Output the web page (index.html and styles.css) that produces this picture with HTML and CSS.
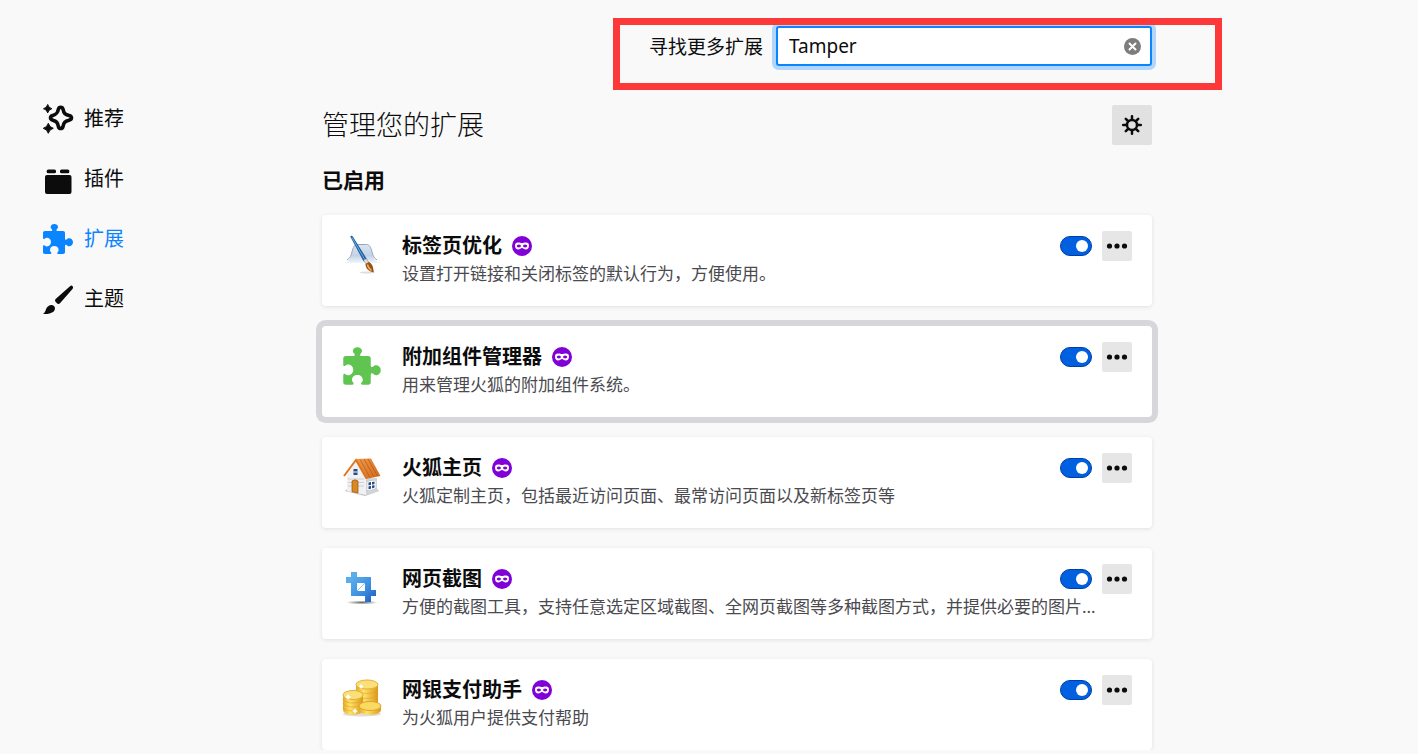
FILE: index.html
```
<!DOCTYPE html>
<html lang="zh-CN">
  <head>
    <meta charset="UTF-8" />
    <meta name="viewport" content="width=device-width, initial-scale=1" />
    <title>管理您的扩展</title>
    <link rel="stylesheet" href="styles.css" />
  </head>
  <body>
    <!-- shared icons -->
    <svg class="sprite" aria-hidden="true">
      <symbol id="icon-mask" viewBox="0 0 20 20">
        <circle cx="10" cy="10" r="10" fill="#8000d7" />
        <path fill="#fff" fill-rule="evenodd" d="M6 6.500c2 0 2.800.6 4 .6s2-.6 4-.6c2 0 3 .9 3 3 0 2.500-1.300 4-3.200 4-1.800 0-2.600-1.500-3.800-1.500s-2 1.500-3.800 1.500C4.300 13.500 3 12 3 9.500c0-2.100 1-3 3-3zM6.900 8.600c-1.300 0-2.100.9-2.100 1.400s.8 1.400 2.100 1.400S8.900 10.600 8.900 10s-.7-1.400-2-1.400zm6.200 0c-1.300 0-2 .8-2 1.400s.7 1.400 2 1.400 2.100-.9 2.100-1.400-.8-1.400-2.100-1.400z" />
      </symbol>
      <symbol id="icon-more" viewBox="0 0 30 30">
        <circle cx="7.500" cy="15" r="2.600" />
        <circle cx="15" cy="15" r="2.600" />
        <circle cx="22.500" cy="15" r="2.600" />
      </symbol>
      <symbol id="icon-puzzle" viewBox="0 0 32 32">
        <path d="M3 8h6c1.200 0 1.600-.8 1-1.600C9.200 5.500 8.700 5 8.700 4c0-1.800 1.600-3 3.600-3s3.700 1.200 3.700 3c0 1-.6 1.500-1.300 2.400-.6.8-.2 1.600 1 1.600H21c1.300 0 2 .7 2 2v5.500c0 1.200.8 1.600 1.600 1 .9-.7 1.400-1.200 2.600-1.200 2.200 0 3.800 1.700 3.800 4s-1.600 4-3.800 4c-1.200 0-1.700-.6-2.600-1.300-.8-.6-1.600-.2-1.600 1V29c0 1.300-.7 2-2 2h-4.500c-1.200 0-1.600-.8-1-1.600.7-.8 1.100-1.300 1.100-2.400 0-2.300-1.700-3.900-4.300-3.900S8 24.700 8 27c0 1.100.4 1.600 1.100 2.400.6.8.2 1.600-1 1.600H3c-1.300 0-2-.7-2-2v-5.500c0-1.200.8-1.600 1.600-1 .8.600 1.400.9 2.300.900C7.200 23.400 9 21.500 9 19s-1.800-4.200-4.100-4.200c-.9 0-1.500.3-2.300.9-.8.6-1.600.2-1.600-1V10c0-1.300.7-2 2-2z" />
      </symbol>
    </svg>

    <div class="page">
      <nav class="sidebar">
        <a class="category" href="#discover">
          <svg class="category-icon" viewBox="0 0 32 32">
            <path d="M18.700 4.200c1.400 0 2 .7 2.300 2 .8 4 1.900 5.200 6 6.200 1.600.4 2.500 1.100 2.500 2.400s-.9 2-2.500 2.400c-4.100 1-5.200 2.200-6 6.300-.3 1.300-.9 2-2.300 2s-2-.7-2.300-2c-.8-4.100-1.900-5.300-5.600-6.300-1.500-.4-2.300-1.100-2.300-2.400s.8-2 2.300-2.400c3.700-1 4.800-2.200 5.600-6.200.3-1.300.9-2 2.300-2z" fill="none" stroke="currentColor" stroke-width="3.600" stroke-linejoin="round" />
            <path d="M5.700 1.500q.8 3.400 4.200 4.200-3.400.8-4.200 4.200-.8-3.400-4.200-4.200 3.400-.8 4.200-4.200zM6.300 20.300q1 4 5 5-4 1-5 5-1-4-5-5 4-1 5-5z" stroke="currentColor" stroke-width="1" stroke-linejoin="round" />
          </svg>
          <span>推荐</span>
        </a>
        <a class="category" href="#plugins">
          <svg class="category-icon" viewBox="0 0 32 32">
            <rect x="4.700" y="6.500" width="9.300" height="3.800" rx="1.500" />
            <rect x="18" y="6.500" width="9.300" height="3.800" rx="1.500" />
            <rect x="3" y="12" width="26.500" height="19" rx="2" />
          </svg>
          <span>插件</span>
        </a>
        <a class="category selected" href="#extensions" aria-current="page">
          <svg class="category-icon"><use href="#icon-puzzle" /></svg>
          <span>扩展</span>
        </a>
        <a class="category" href="#themes">
          <svg class="category-icon" viewBox="0 0 32 32">
            <path d="M30.600 3.200c.8.900.6 1.800-.1 2.700L18.200 20.100c-1 1.100-2.300 1.200-3.500 0l-.8-.8c-1.200-1.200-1.100-2.500 0-3.500L28 3.200c.9-.8 1.800-.8 2.600 0zM12 23c1.700 1.800 1 4.700-1 6-2.300 1.600-6.300 2.400-10 1.900 2-1.300 2.200-2.700 3-4.700 1.200-3.600 5.600-5.600 8-3.200z" />
          </svg>
          <span>主题</span>
        </a>
      </nav>

      <main class="main">
        <form class="search">
          <label for="search-addons">寻找更多扩展</label>
          <div class="search-box">
            <input id="search-addons" type="text" value="Tamper" autocomplete="off" />
            <button class="clear" type="reset" aria-label="清除">
              <svg viewBox="0 0 17 17">
                <circle cx="8.500" cy="8.500" r="8.500" fill="#7d7d7d" />
                <path d="M5.500 5.500l6 6m0-6l-6 6" stroke="#fff" stroke-width="2" stroke-linecap="round" />
              </svg>
            </button>
          </div>
          <div class="marker"></div>
        </form>

        <header class="heading">
          <h1>管理您的扩展</h1>
          <button class="settings" type="button" aria-label="附加组件工具">
            <svg viewBox="0 0 20 20" fill="none" stroke="currentColor" stroke-width="2.500" stroke-linecap="round">
              <circle cx="10" cy="10" r="5" />
              <path d="M10 1.200v3M10 15.800v3M1.200 10h3M15.800 10h3M3.800 3.800l2.200 2.200M14 14l2.200 2.200M16.200 3.800L14 6M6 14l-2.200 2.200" />
            </svg>
          </button>
        </header>

        <h2>已启用</h2>

        <section class="addons">
          <article class="card">
            <svg class="addon-icon" viewBox="0 0 40 40">
              <defs>
                <linearGradient id="tab-fill" x2="0" y2="1">
                  <stop offset="0" stop-color="#dbe5f1" />
                  <stop offset=".6" stop-color="#c3d2e6" />
                  <stop offset="1" stop-color="#f2f6fb" />
                </linearGradient>
              </defs>
              <ellipse cx="25" cy="37.500" rx="7" ry="1" fill="#ddd" />
              <path d="M2 28c5-1 6.500-5 8-11 1.200-5 2.500-7.500 5.500-7.500h9c3 0 4.300 2.500 5.500 7.500 1.500 6 3 10 8 11z" fill="url(#tab-fill)" />
              <path d="M5 25c3-2 4-4 5-8 1.200-5 2.500-7.500 5.500-7.500h9c3 0 4.300 2.500 5.500 7.500 1 4 2 6 5 8" fill="none" stroke="#92a6c2" />
              <path d="M8.500 2L21.500 26.300l3.500-2L10.800 1.400c-.8-1.200-3-.6-2.300.6z" fill="#1f5f9f" />
              <path d="M10 2.500L23 25" stroke="#6fb0e2" stroke-width="1" />
              <path d="M21.500 25.300l3-1.700 2.400 4.200-2.600 1.500z" fill="#d9dce0" stroke="#777" stroke-width=".5" />
              <path d="M23.500 29l3.500-2c4.500 2.500 4 6.500 5 10.500-4.500-.8-8.500-3.500-8.500-8.500z" fill="#9a5216" />
              <path d="M25.500 29.500c.3 2.500 2 4.500 4 6" fill="none" stroke="#efb75a" stroke-width="1.500" />
            </svg>
            <h3>标签页优化 <svg class="badge"><use href="#icon-mask" /></svg></h3>
            <div class="actions">
              <input class="toggle" type="checkbox" checked aria-label="标签页优化" />
              <button class="more" type="button" aria-label="更多选项"><svg><use href="#icon-more" /></svg></button>
            </div>
            <p>设置打开链接和关闭标签的默认行为，方便使用。</p>
          </article>

          <article class="card highlight">
            <svg class="addon-icon green"><use href="#icon-puzzle" /></svg>
            <h3>附加组件管理器 <svg class="badge"><use href="#icon-mask" /></svg></h3>
            <div class="actions">
              <input class="toggle" type="checkbox" checked aria-label="附加组件管理器" />
              <button class="more" type="button" aria-label="更多选项"><svg><use href="#icon-more" /></svg></button>
            </div>
            <p>用来管理火狐的附加组件系统。</p>
          </article>

          <article class="card">
            <svg class="addon-icon" viewBox="0 0 40 40">
              <defs>
                <linearGradient id="roof" x2="1" y2="1">
                  <stop offset="0" stop-color="#f09a48" />
                  <stop offset="1" stop-color="#d0691c" />
                </linearGradient>
              </defs>
              <path d="M3 34l20 5 14-5-3-3H6z" fill="#999" opacity=".6" />
              <path d="M5 18l9-13L24 21v17L5 34z" fill="#f1f1f3" />
              <path d="M24 21h11v13l-11 4z" fill="#d4d5da" />
              <path d="M6 22h16M6 25.500h16M6 29h16M24 24l11-1M24 31l11-2M24 34.500l11-3" stroke="#c5c6cb" stroke-width=".8" />
              <path d="M14 2l15-.5L38.500 19 24 22z" fill="url(#roof)" />
              <path d="M18 2.500l10 18M22 2l10 18M26 2l9.500 17" stroke="#b9561a" stroke-width=".7" />
              <path d="M2 19L14 3l10.500 18.500" fill="none" stroke="#dd7420" stroke-width="2" />
              <path d="M11.500 12h4v6h-4z" fill="#244e83" />
              <path d="M11.500 15h4" stroke="#fff" />
              <path d="M10 24q3-2.500 6 0v12l-6-1.200z" fill="#d9891f" stroke="#94510e" stroke-width=".7" />
              <path d="M26 25l7-1v7l-7 2z" fill="#244e83" stroke="#fff" />
              <path d="M29.500 24.500v8M26 29l7-1.500" stroke="#fff" />
            </svg>
            <h3>火狐主页 <svg class="badge"><use href="#icon-mask" /></svg></h3>
            <div class="actions">
              <input class="toggle" type="checkbox" checked aria-label="火狐主页" />
              <button class="more" type="button" aria-label="更多选项"><svg><use href="#icon-more" /></svg></button>
            </div>
            <p>火狐定制主页，包括最近访问页面、最常访问页面以及新标签页等</p>
          </article>

          <article class="card">
            <svg class="addon-icon" viewBox="0 0 40 40">
              <defs>
                <linearGradient id="crop" x2="1" y2="1">
                  <stop offset=".2" stop-color="#5aaee9" />
                  <stop offset=".6" stop-color="#3b8fe0" />
                  <stop offset="1" stop-color="#1f58bd" />
                </linearGradient>
                <radialGradient id="crop-shadow">
                  <stop offset="0" stop-color="#666" />
                  <stop offset="1" stop-color="#fff" />
                </radialGradient>
              </defs>
              <ellipse cx="20" cy="34.500" rx="16" ry="2" fill="url(#crop-shadow)" />
              <path fill="url(#crop)" fill-rule="evenodd" d="M9 4h6v5h14v13h5v6h-5v6h-6v-6H9V15H4V9h5zm6 11v8h8v-8z" />
              <path d="M15 23l8-8" stroke="#8cc6f0" stroke-width="1" />
            </svg>
            <h3>网页截图 <svg class="badge"><use href="#icon-mask" /></svg></h3>
            <div class="actions">
              <input class="toggle" type="checkbox" checked aria-label="网页截图" />
              <button class="more" type="button" aria-label="更多选项"><svg><use href="#icon-more" /></svg></button>
            </div>
            <p>方便的截图工具，支持任意选定区域截图、全网页截图等多种截图方式，并提供必要的图片...</p>
          </article>

          <article class="card">
            <svg class="addon-icon" viewBox="0 0 40 40">
              <defs>
                <linearGradient id="gold">
                  <stop offset="0" stop-color="#e9a91f" />
                  <stop offset=".35" stop-color="#ffe26a" />
                  <stop offset="1" stop-color="#dc9a18" />
                </linearGradient>
              </defs>
              <ellipse cx="20" cy="35" rx="19" ry="2.500" fill="#ddd" />
              <path d="M14 5v20a11 5 0 0 0 22 0V5z" fill="url(#gold)" />
              <path d="M14 10a11 4.500 0 0 0 22 0M14 15a11 4.500 0 0 0 22 0M14 20a11 4.500 0 0 0 22 0" fill="none" stroke="#d69a22" stroke-width=".5" />
              <ellipse cx="25" cy="5.500" rx="11" ry="4.500" fill="#fbe07a" stroke="#e5b037" />
              <path d="M1 16v15a10 5 0 0 0 20 0V16z" fill="url(#gold)" />
              <path d="M1 20a10 4 0 0 0 20 0M1 24a10 4 0 0 0 20 0M1 28a10 4 0 0 0 20 0" fill="none" stroke="#d69a22" stroke-width=".5" />
              <ellipse cx="11" cy="16" rx="10" ry="4.500" fill="#fbe07a" stroke="#e5b037" />
              <path d="M17 27v4a11 5 0 0 0 22 0v-4z" fill="url(#gold)" />
              <ellipse cx="28" cy="27" rx="11" ry="4.500" fill="#fadb62" stroke="#dea42a" />
              <path d="M6 15l1.200 1.800L9 18l-1.800 1.200L6 21l-1.200-1.800L3 18l1.800-1.200zM19 5l1 1.500L21.500 7.500 20 8.500 19 10l-1-1.500-1.500-1 1.500-1zM13 29l1 2 2 1-2 1-1 2-1-2-2-1 2-1z" fill="#fff" />
            </svg>
            <h3>网银支付助手 <svg class="badge"><use href="#icon-mask" /></svg></h3>
            <div class="actions">
              <input class="toggle" type="checkbox" checked aria-label="网银支付助手" />
              <button class="more" type="button" aria-label="更多选项"><svg><use href="#icon-more" /></svg></button>
            </div>
            <p>为火狐用户提供支付帮助</p>
          </article>
        </section>
      </main>
    </div>
  </body>
</html>
```
FILE: styles.css
```
* {
  box-sizing: border-box;
}

body {
  margin: 0;
  background-color: #f9f9fa;
  color: #0c0c0d;
  font-family: 'Noto Sans', 'Noto Sans CJK SC', sans-serif;
  font-size: 20px;
}

h1,
h2,
h3,
p {
  margin: 0;
}

button {
  padding: 0;
  border: none;
  border-radius: 2px;
  color: inherit;
  cursor: pointer;
}

svg {
  display: block;
  fill: currentColor;
}

.sprite {
  display: none;
}

.page {
  display: grid;
  grid-template-columns: 322px minmax(0, 830px);
}

/* sidebar */

.sidebar {
  padding: 87px 0 0 42px;
}

.category {
  display: flex;
  align-items: center;
  gap: 10px;
  height: 60px;
  color: inherit;
  text-decoration: none;
}

.category.selected {
  color: #0a84ff;
}

.category-icon {
  width: 32px;
  height: 32px;
  margin-top: 4px;
}

/* search */

.main {
  padding-top: 26px;
}

.search {
  position: relative;
  display: flex;
  align-items: center;
  justify-content: flex-end;
  gap: 13px;
  font-size: 19px;
}

.search-box {
  display: flex;
  align-items: center;
  width: 376px;
  height: 40px;
  padding: 0 9px 0 11px;
  border: 2px solid #0a84ff;
  border-radius: 3px;
  background-color: #fff;
  box-shadow: 0 0 0 4px rgba(10, 132, 255, 0.3);
}

.search-box input {
  flex: 1;
  min-width: 0;
  padding: 0;
  border: none;
  outline: none;
  background: none;
  color: inherit;
  font: inherit;
}

.clear {
  background: none;
}

.clear svg {
  width: 17px;
  height: 17px;
}

.marker {
  position: absolute;
  top: -8px;
  right: -70px;
  width: 609px;
  height: 72px;
  border: 7px solid #fc3838;
  pointer-events: none;
}

/* heading */

.heading {
  display: flex;
  align-items: center;
  justify-content: space-between;
  margin-top: 39px;
}

h1 {
  font-size: 27px;
  font-weight: 300;
  line-height: 40px;
}

h2 {
  margin: 20px 0;
  font-size: 21px;
  line-height: 30px;
}

.settings {
  display: grid;
  place-items: center;
  width: 40px;
  height: 40px;
  background-color: #e1e1e2;
}

.settings svg {
  width: 20px;
  height: 20px;
  fill: none;
}

/* add-on cards */

.addons {
  display: grid;
  grid-template-columns: minmax(0, 1fr);
  gap: 20px;
}

.card {
  display: grid;
  grid-template-columns: 40px minmax(0, 1fr) auto;
  column-gap: 20px;
  padding: 16px 20px 19px;
  border-radius: 4px;
  background-color: #fff;
  box-shadow: 0 1px 4px rgba(12, 12, 13, 0.1);
}

.card.highlight {
  box-shadow: 0 0 0 6px #d7d7db;
}

.addon-icon {
  grid-row: span 2;
  width: 40px;
  height: 40px;
  margin-top: 4px;
}

.addon-icon.green {
  color: #60c550;
}

h3 {
  display: flex;
  align-items: center;
  gap: 10px;
  font-size: 20px;
  line-height: 30px;
}

.badge {
  width: 20px;
  height: 20px;
}

.card p {
  grid-column: 2 / 4;
  overflow: hidden;
  color: #4a4a4f;
  font-size: 17px;
  line-height: 26px;
  text-overflow: ellipsis;
  white-space: nowrap;
}

.actions {
  display: flex;
  align-items: center;
  gap: 10px;
  height: 30px;
}

.toggle {
  display: flex;
  align-items: center;
  justify-content: flex-end;
  width: 32px;
  height: 20px;
  margin: 0;
  padding: 0 3px;
  border: 1px solid #003eaa;
  border-radius: 10px;
  background-color: #0060df;
  appearance: none;
  cursor: pointer;
}

.toggle::before {
  content: '';
  width: 12px;
  height: 12px;
  border-radius: 50%;
  background-color: #fff;
}

.toggle:not(:checked) {
  justify-content: flex-start;
  border-color: #b1b1b3;
  background-color: #b1b1b3;
}

.more {
  width: 30px;
  height: 30px;
  background-color: #e6e6e6;
}

.more svg {
  width: 30px;
  height: 30px;
}
```
